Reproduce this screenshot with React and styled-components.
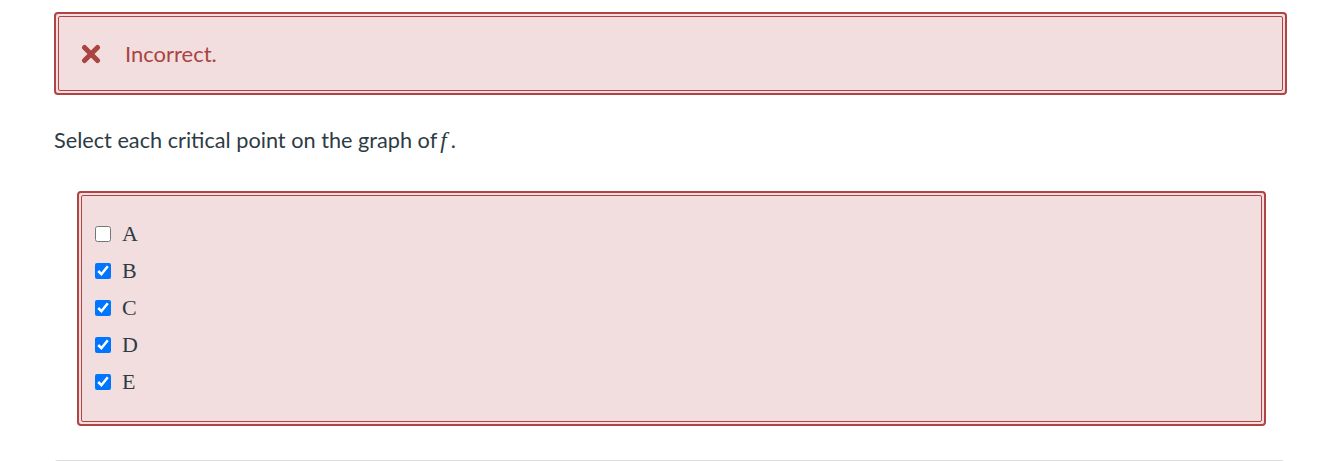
import React from "react";
import styled, { createGlobalStyle } from "styled-components";

const Global = createGlobalStyle`
  html, body { margin: 0; padding: 0; background: #fff; }
  body { font-family: Lato, "Noto Sans", sans-serif; color: #2d3b45; }
`;

const Page = styled.div`
  width: 1233px;
  margin-left: 54px;
  padding-top: 12px;
`;

const AlertOuter = styled.div`
  border: 2px solid #b04445;
  border-radius: 4px;
  padding: 2px;
  background: #f2dede;
  margin: ${(p) => p.$margin || "0"};
`;

const AlertInner = styled.div`
  border: 1px solid #b04445;
  border-radius: 2px;
  box-sizing: border-box;
`;

const Banner = styled.div`
  display: flex;
  align-items: center;
  height: 73px;
  padding-left: 22px;
  box-sizing: border-box;
`;

const Icon = styled.svg`
  width: 20px;
  height: 20px;
  flex: none;
`;

const BannerText = styled.span`
  margin-left: 24px;
  font-size: 22px;
  color: #a94442;
`;

const Question = styled.p`
  margin: 30px 0 0 0;
  font-size: 21.7px;
  line-height: 30px;
  color: #2d3b45;
`;

const MathF = styled.i`
  font-family: "Liberation Serif", "DejaVu Serif", serif;
  font-size: 23px;
  margin-left: 3px;
  margin-right: 4px;
`;

const List = styled.div`
  display: flex;
  flex-direction: column;
  padding: 19px 0 21px 13px;
`;

const Row = styled.label`
  display: flex;
  align-items: center;
  height: 37px;
`;

const Box = styled.input`
  width: 16px;
  height: 16px;
  margin: 0;
  flex: none;
`;

const Letter = styled.span`
  margin-left: 11px;
  font-family: "Liberation Serif", "Times New Roman", serif;
  font-size: 22px;
  color: #2d3b45;
`;

const NextCard = styled.div`
  margin-top: 34px;
  margin-right: 2px;
  height: 4px;
  border-top: 1px solid #dcdcdc;
  border-left: 1px solid #dcdcdc;
  border-right: 1px solid #dcdcdc;
  border-radius: 4px 4px 0 0;
`;

const options = [
  { l: "A", c: false },
  { l: "B", c: true },
  { l: "C", c: true },
  { l: "D", c: true },
  { l: "E", c: true },
];

export default function App() {
  return (
    <>
      <Global />
      <Page>
        <AlertOuter>
          <AlertInner>
            <Banner>
              <Icon viewBox="0 0 20 20">
                <path
                  d="M3.5 3.5 L16.5 16.5 M16.5 3.5 L3.5 16.5"
                  stroke="#a94442"
                  strokeWidth="5"
                  strokeLinecap="round"
                />
              </Icon>
              <BannerText>Incorrect.</BannerText>
            </Banner>
          </AlertInner>
        </AlertOuter>
        <Question>
          Select each critical point on the graph of<MathF>f</MathF>.
        </Question>
        <AlertOuter $margin="35px 21px 0 23px">
          <AlertInner>
            <List>
              {options.map((o) => (
                <Row key={o.l}>
                  <Box type="checkbox" checked={o.c} readOnly />
                  <Letter>{o.l}</Letter>
                </Row>
              ))}
            </List>
          </AlertInner>
        </AlertOuter>
        <NextCard />
      </Page>
    </>
  );
}
